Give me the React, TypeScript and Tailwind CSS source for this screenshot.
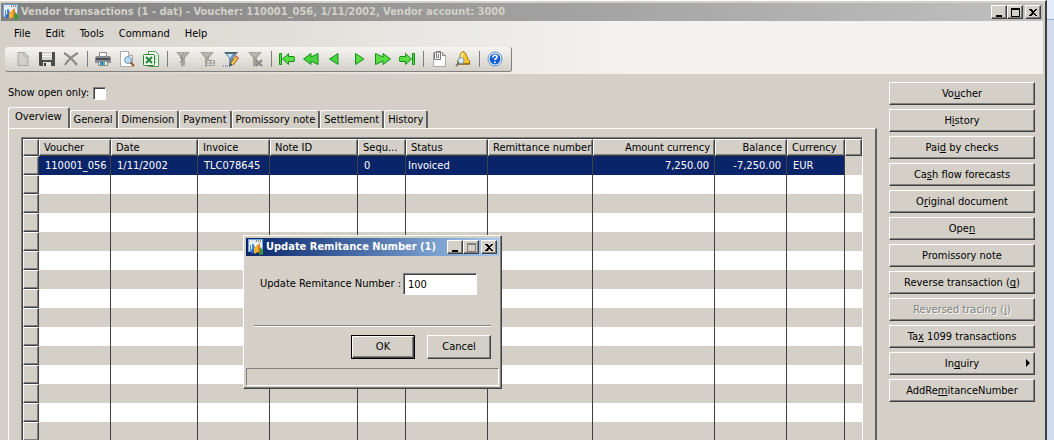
import type { ReactNode } from "react";

const raised =
  "border border-t-white border-l-white border-r-[#404040] border-b-[#404040] shadow-[inset_-1px_-1px_0_#808080]";

const AppIcon = () => (
  <svg width="16" height="16" viewBox="0 0 16 16" className="shrink-0">
    <rect x="0.5" y="0.5" width="14" height="12" fill="#e8f1fa" stroke="#6fa3d6" />
    <rect x="1" y="1" width="13" height="3" fill="#e3e6ea" />
    <path d="M8 2h1M10 2h1M12 2h1" stroke="#333" />
    <path d="M2 12V6h1v6M4 12V5h2v6" fill="#4a8ac8" />
    <path d="M3 15v-4l4-4v5z" fill="#2f6fd0" />
    <path d="M6 15V9l4-4v8z" fill="#f2b52d" />
    <path d="M10 14V6l2-2v9z" fill="#e8762a" />
    <path d="M12 8l3 3v4l-4 1z" fill="#3c9a3c" />
  </svg>
);

const funnel = "M1 1h14L10 7v7l-4 2V7z";

const Funnel = ({ children }: { children?: ReactNode }) => (
  <>
    <path d={funnel} fill="#a6a39d" />
    <path d="M3 2h9L8 6z" fill="#bdbab4" />
    {children}
  </>
);

const tools: { label: string; art: ReactNode; gap?: boolean }[] = [
  {
    label: "New",
    art: <path d="M3 1.500h6.500l3.500 3.500v9.500H3zM9 1.500V5h4" fill="#d2cfc9" stroke="#aaa69f" />,
  },
  {
    label: "Save",
    art: (
      <>
        <path d="M0 1h16v14H1l-1-1z" fill="#4a4a48" />
        <path d="M3 1h10v8H3z" fill="#d5d4d0" />
        <path d="M3 3.500h10M3 5.500h10" stroke="#f5f5f5" />
        <path d="M4 11h8v4H4z" fill="#e4e4e2" />
        <path d="M5 12h2v3H5z" fill="#333" />
      </>
    ),
  },
  {
    label: "Delete",
    art: <path d="M1 2c5 3 9 7 13 12M15 2C9 5 5 9 2 14" fill="none" stroke="#8e8b86" strokeWidth="2.200" />,
  },
  {
    label: "Print",
    gap: true,
    art: (
      <>
        <path d="M4.500 1.500h7v5h-7z" fill="#fff" stroke="#888" />
        <path d="M1 5h14l1 2v5H0V7z" fill="#8a8d92" />
        <path d="M1 7h14v2H1z" fill="#4d5056" />
        <path d="M3.500 10.500h9v4h-9z" fill="#eef5fb" stroke="#888" />
        <path d="M5 11h3v3H5z" fill="#328bd2" />
        <path d="M8 11h2v3H8z" fill="#58b37d" />
      </>
    ),
  },
  {
    label: "Print preview",
    art: (
      <>
        <path d="M1.500 .5h8l4 4v11h-12z" fill="#fff" stroke="#aaa" />
        <path d="M9.500.5v4h4" fill="#eee" stroke="#aaa" />
        <circle cx="9" cy="9" r="3.500" fill="#b7dcf3" stroke="#7296b3" />
        <path d="M11.500 11.500L15 15" stroke="#985126" strokeWidth="2" />
      </>
    ),
  },
  {
    label: "Export to Excel",
    art: (
      <>
        <path d="M5.500.5h7l3 3v12h-10z" fill="#fff" stroke="#4c9c50" />
        <path d="M10 5h4M10 8h4M10 11h4" stroke="#8bc08a" />
        <rect x=".5" y="3.500" width="11" height="11" rx="1" fill="#edf7ea" stroke="#308238" />
        <path d="M3 6l6 6M9 6l-6 6" stroke="#24863a" strokeWidth="2" />
      </>
    ),
  },
  {
    label: "Filter by selection",
    gap: true,
    art: (
      <Funnel>
        <path d="M9 2L5 7h3l-3 5" fill="none" stroke="#88857f" />
      </Funnel>
    ),
  },
  {
    label: "Filter by grid",
    art: (
      <Funnel>
        <path d="M7.500 9.500h8v5h-8zM7.500 12h8M11.500 9.500v5" fill="#e3e1dd" stroke="#a09d97" />
      </Funnel>
    ),
  },
  {
    label: "Advanced filter",
    art: (
      <>
        <path d={funnel} fill="#6b8faa" />
        <path d="M1 1h14l-2 2H3z" fill="#4e6a7d" />
        <path d="M4 3h6L7 7z" fill="#c7e2f1" />
        <path d="M0 15h7" stroke="#315b98" strokeDasharray="1 1" />
        <path d="M14 6L9 13" stroke="#ad6c1b" strokeWidth="4" />
        <path d="M14 6L9 13" stroke="#ffd269" strokeWidth="2" />
        <path d="M13 4l3 3-1 1-3-3z" fill="#d66a55" />
        <path d="M7 15v-3l2 2z" fill="#333" />
      </>
    ),
  },
  {
    label: "Remove filter",
    art: (
      <Funnel>
        <path d="M9 9l6 6M15 9l-6 6" stroke="#8a8782" strokeWidth="2" />
      </Funnel>
    ),
  },
  {
    label: "First",
    gap: true,
    art: (
      <path
        d="M.5 2.500h2v11h-2zM3.500 8l6-5.500v3h5.500l1 2.500-1 2.500H9.500v3z"
        fill="#57dc45"
        stroke="#149018"
      />
    ),
  },
  {
    label: "Previous page",
    art: <path d="M.5 8L8 2.500V6l7-3.500v11L8 10v3.500z" fill="#48d43d" stroke="#149018" />,
  },
  { label: "Previous", art: <path d="M2.500 8l8.500-5.500v11z" fill="#48d43d" stroke="#149018" /> },
  { label: "Next", art: <path d="M4.500 2.500L13 8l-8.500 5.500z" fill="#57dc45" stroke="#149018" /> },
  {
    label: "Next page",
    art: <path d="M15.500 8L8 2.500V6L.5 2.500v11L8 10v3.500z" fill="#57dc45" stroke="#149018" />,
  },
  {
    label: "Last",
    art: (
      <path
        d="M13.500 2.500h2v11h-2zM12.500 8l-6-5.500v3H1L0 8l1 2.500h5.500v3z"
        fill="#57dc45"
        stroke="#149018"
      />
    ),
  },
  {
    label: "Document handling",
    gap: true,
    art: (
      <>
        <path d="M2.500 1.500h9l3 3v11h-12z" fill="#fff" stroke="#aaa" />
        <path d="M11.500 1.500v3h3" fill="none" stroke="#888" />
        <path d="M3.500 1.500v7h6v-8h-4v6h2V3" fill="none" stroke="#777" />
      </>
    ),
  },
  {
    label: "Alert",
    art: (
      <>
        <path d="M8 .5c4 1 3 6 6.500 9.500v3h-12v-3C6 7 4 2 8 .5z" fill="#f8c42d" stroke="#a77308" />
        <path d="M8 2c-2 2-1 5-3 8" fill="none" stroke="#fff2a8" strokeWidth="2" />
        <path d="M2 13h13" stroke="#70501a" />
        <circle cx="6" cy="9.500" r="3" fill="#d8effb" stroke="#7e98a8" />
        <path d="M4 12l-3 3" stroke="#777" strokeWidth="2" />
      </>
    ),
  },
  {
    label: "Help",
    gap: true,
    art: (
      <>
        <circle cx="8" cy="8" r="7" fill="#fff" stroke="#5689cf" />
        <circle cx="8" cy="8" r="5.500" fill="#1760d0" />
        <path
          d="M6 6.500C6 3.500 10 3.800 10 6c0 1.500-2 1.500-2 3M8 10.500V12"
          fill="none"
          stroke="#fff"
          strokeWidth="1.600"
        />
      </>
    ),
  },
];

const captions: { label: string; path: string }[] = [
  { label: "Minimize", path: "M3 8h6v2H3z" },
  { label: "Maximize", path: "M2 1h9v9H2zM3 3v6h7V3z" },
  { label: "Close", path: "M2 2h2l2 2 2-2h2L7 5.500 10 9H8L6 7 4 9H2l3-3.500z" },
];

const Captions = ({ dimMax }: { dimMax?: boolean }) => (
  <div className="flex shrink-0">
    {captions.map((c) => (
      <button
        key={c.label}
        aria-label={c.label}
        className={`flex h-[14px] w-4 items-center justify-center bg-[#d4d0c8] last:ml-0.5 ${raised}`}
      >
        <svg width="12" height="11" viewBox="0 0 12 11" shapeRendering="crispEdges" className="shrink-0">
          <path d={c.path} fillRule="evenodd" fill={dimMax && c.label === "Maximize" ? "#808080" : "#000"} />
        </svg>
      </button>
    ))}
  </div>
);

const tabs = ["General", "Dimension", "Payment", "Promissory note", "Settlement", "History"];

const columns = [
  { name: "Voucher", width: "w-[72px]", value: "110001_056" },
  { name: "Date", width: "w-[87px]", value: "1/11/2002" },
  { name: "Invoice", width: "w-[72px]", value: "TLC078645" },
  { name: "Note ID", width: "w-[88px]", value: "" },
  { name: "Sequ...", width: "w-12", value: "0" },
  { name: "Status", width: "w-[82px]", value: "Invoiced" },
  { name: "Remittance number", width: "w-[105px]", value: "" },
  { name: "Amount currency", width: "w-[122px]", value: "7,250.00", right: true },
  { name: "Balance", width: "w-[72px]", value: "-7,250.00", right: true },
  { name: "Currency", width: "w-[58px]", value: "EUR" },
];

const emptyRows = Array.from({ length: 15 }, (_, i) => i);

// [before, access key, after]
const actions: { text: [string, string, string]; disabled?: boolean; menu?: boolean }[] = [
  { text: ["Vo", "u", "cher"] },
  { text: ["H", "i", "story"] },
  { text: ["Pai", "d", " by checks"] },
  { text: ["Ca", "s", "h flow forecasts"] },
  { text: ["O", "r", "iginal document"] },
  { text: ["Ope", "n", ""] },
  { text: ["Promissory note", "", ""] },
  { text: ["Reverse transaction (", "g", ")"] },
  { text: ["Reversed tracing (", "j", ")"], disabled: true },
  { text: ["Ta", "x", " 1099 transactions"] },
  { text: ["In", "q", "uiry"], menu: true },
  { text: ["AddRe", "m", "itanceNumber"] },
];

const Grid = () => (
  <div className="border-t border-r border-l border-t-[#808080] border-r-white border-l-[#808080]">
    <table className="w-full table-fixed border-separate border-spacing-0 border-t border-l border-[#404040] text-left">
      <thead>
        <tr className="h-[17px]">
          <th className={`w-4 bg-[#d4d0c8] p-0 ${raised}`} aria-label="Row" />
          {columns.map((c) => (
            <th
              key={c.name}
              className={`${c.width} overflow-hidden bg-[#d4d0c8] py-0 pl-1 font-normal leading-[15px] whitespace-nowrap ${raised} ${
                c.right ? "pr-1 text-right" : "pr-0"
              }`}
            >
              {c.name}
            </th>
          ))}
          <th className={`bg-[#d4d0c8] p-0 ${raised}`} aria-label="Filler" />
        </tr>
      </thead>
      <tbody>
        <tr className="h-[19px] bg-[#0a246a] text-white">
          <td className={`bg-[#d4d0c8] ${raised}`} />
          {columns.map((c) => (
            <td
              key={c.name}
              className={`border-r border-[#404040] py-0 pr-[5px] ${c.name === "Status" ? "pl-0.5" : "pl-1.5"} ${
                c.right ? "text-right" : ""
              }`}
            >
              {c.value}
            </td>
          ))}
          <td className="bg-[#d4d0c8]" />
        </tr>
        {emptyRows.map((r) => (
          <tr key={r} className="h-[19px] odd:bg-[#d4d0c8] even:bg-white">
            <td className={`bg-[#d4d0c8] ${raised}`} />
            {columns.map((c) => (
              <td key={c.name} className="border-r border-[#404040]" />
            ))}
            <td />
          </tr>
        ))}
      </tbody>
    </table>
  </div>
);

const RemittanceDialog = () => (
  <div
    role="dialog"
    aria-label="Update Remitance Number"
    className={`absolute top-[235px] left-[243px] w-[259px] bg-[#d4d0c8] p-0.5 ${raised}`}
  >
    <div className="flex h-[18px] items-center gap-0.5 bg-linear-to-r from-[#0a246a] to-[#a6caf0] px-0.5">
      <AppIcon />
      <span className="grow font-bold whitespace-nowrap text-white">Update Remitance Number (1)</span>
      <Captions dimMax />
    </div>
    <div className="px-2">
      <div className="flex items-center gap-0.5 pt-[17px] pl-1.5">
        <label htmlFor="remittance" className="whitespace-nowrap">
          Update Remitance Number :
        </label>
        <input
          id="remittance"
          defaultValue="100"
          autoFocus
          className="h-[22px] w-[74px] border border-t-[#808080] border-r-white border-b-white border-l-[#808080] bg-white px-1 shadow-[inset_1px_1px_0_#404040] outline-none"
        />
      </div>
      <hr className="mt-[30px] border-t border-b border-t-[#808080] border-b-white" />
      <div className="mt-2 flex justify-end gap-3">
        <button className="h-6 w-16 border border-black">
          <span className={`block h-full leading-5 ${raised}`}>OK</span>
        </button>
        <button className={`h-6 w-16 ${raised}`}>Cancel</button>
      </div>
    </div>
    <div className="mt-[9px] h-[18px] border border-t-[#808080] border-r-white border-b-white border-l-[#808080]" />
  </div>
);

const App = () => {
  return (
    <div className="flex h-screen overflow-hidden bg-[#d3dcec] font-['DejaVu_Sans_Condensed','DejaVu_Sans',sans-serif] text-[11px] leading-[14px] text-black">
      <div className="flex min-w-0 grow flex-col border-t border-r-2 border-t-white border-r-[#404040] bg-[#d4d0c8] pt-0.5">
        <header className="mr-0.5 ml-px">
          <div className="flex h-[18px] items-center gap-0.5 bg-linear-to-r from-[#808080] to-[#c0c0c0] px-0.5">
            <AppIcon />
            <h1 className="grow truncate font-bold text-[#d4d0c8]">
              Vendor transactions (1 - dat) - Voucher: 110001_056, 1/11/2002, Vendor account: 3000
            </h1>
            <Captions />
          </div>
          <div className="h-[53px] bg-linear-to-r from-[#d4d0c8] to-[#f4f2f1] to-60% px-1">
            <nav className="flex h-[26px] items-center gap-[15px] pl-[9px]">
              {["File", "Edit", "Tools", "Command", "Help"].map((m) => (
                <button key={m}>{m}</button>
              ))}
            </nav>
            <div className="flex h-[25px] w-fit items-center gap-2 rounded-[3px] border-r border-b border-[#808080] bg-linear-to-b from-[#f6f5f2] to-[#d4d0c8] pr-2 pl-[10px]">
              {tools.map((t) => (
                <div key={t.label} className="flex items-center gap-[7px]">
                  {t.gap && <span className="h-4 w-px bg-[#808080]" />}
                  <button aria-label={t.label}>
                    <svg width="16" height="16" viewBox="0 0 16 16" className="block">
                      {t.art}
                    </svg>
                  </button>
                </div>
              ))}
            </div>
          </div>
        </header>

        <div className="flex min-h-0 grow gap-3 pr-[10px] pl-2">
          <main className="flex min-w-0 grow flex-col pt-3">
            <div className="flex items-center gap-1">
              <label htmlFor="open-only">Show open only:</label>
              <input
                id="open-only"
                type="checkbox"
                className="size-[13px] appearance-none border border-t-[#808080] border-r-white border-b-white border-l-[#808080] bg-white shadow-[inset_1px_1px_0_#404040]"
              />
            </div>
            <div role="tablist" className="mt-[7px] flex items-end">
              <button
                role="tab"
                aria-selected="true"
                className="-mb-px h-[22px] rounded-t-[3px] border-t border-r-2 border-l border-t-white border-r-[#606060] border-l-white bg-[#d4d0c8] px-1.5 pb-1"
              >
                Overview
              </button>
              {tabs.map((t) => (
                <button
                  key={t}
                  role="tab"
                  className="h-[18px] rounded-t-[3px] border-t border-r-2 border-l border-t-white border-r-[#606060] border-l-white px-[3px]"
                >
                  {t}
                </button>
              ))}
            </div>
            <div className="grow border-t border-r-2 border-l border-t-white border-r-[#606060] border-l-white px-3 pt-2">
              <Grid />
            </div>
          </main>
          <aside className="flex w-[146px] shrink-0 flex-col gap-1 pt-2">
            {actions.map((a) => (
              <button
                key={a.text.join("")}
                disabled={a.disabled}
                className={`relative h-[23px] shrink-0 disabled:text-[#808080] disabled:text-shadow-[1px_1px_0_#ffffff] ${raised}`}
              >
                {a.text[0]}
                <u className="[text-decoration-skip-ink:none]">{a.text[1]}</u>
                {a.text[2]}
                {a.menu && (
                  <svg width="4" height="8" viewBox="0 0 4 8" className="absolute top-1.5 right-1">
                    <path d="M0 0l4 4-4 4z" />
                  </svg>
                )}
              </button>
            ))}
          </aside>
        </div>
      </div>
      {/* Desktop showing past the window edge */}
      <div className="w-[7px] shrink-0">
        <div className="h-5 border-b border-[#9fb0cc] bg-[#e3ecf9]" />
      </div>
      <RemittanceDialog />
    </div>
  );
};

export default App;
